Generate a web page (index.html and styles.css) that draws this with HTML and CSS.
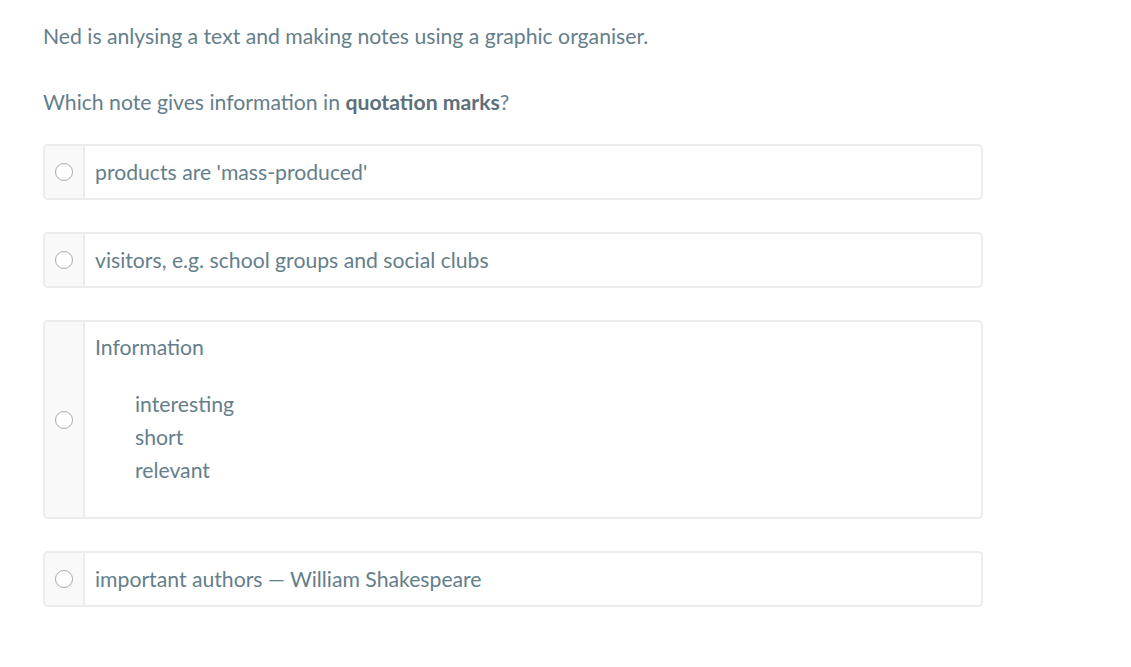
FILE: index.html
```html
<!DOCTYPE html>
<html>
<head>
<meta charset="utf-8">
<link rel="stylesheet" href="styles.css">
</head>
<body>
<div class="page">
  <p class="stem">Ned is anlysing a text and making notes using a graphic organiser.</p>
  <p class="stem q">Which note gives information in <strong>quotation marks</strong>?</p>
  <div class="options">
    <label class="opt">
      <span class="radio-col"><span class="radio"></span></span>
      <span class="txt">products are 'mass-produced'</span>
    </label>
    <label class="opt">
      <span class="radio-col"><span class="radio"></span></span>
      <span class="txt">visitors, e.g. school groups and social clubs</span>
    </label>
    <label class="opt">
      <span class="radio-col"><span class="radio"></span></span>
      <span class="txt tall">
        <span class="head">Information</span>
        <span class="list">
          <span>interesting</span>
          <span>short</span>
          <span>relevant</span>
        </span>
      </span>
    </label>
    <label class="opt">
      <span class="radio-col"><span class="radio"></span></span>
      <span class="txt">important authors — William Shakespeare</span>
    </label>
  </div>
</div>
</body>
</html>
```

FILE: styles.css
```css
html, body { margin: 0; padding: 0; background: #fff; }
body { font-family: "Lato", "Open Sans", sans-serif; color: #647e8b; font-size: 21.2px; }
.page { padding: 22px 0 0 43px; width: 940px; }
.stem { margin: 0; line-height: 28px; }
.q { margin-top: 38px; }
.q strong { font-weight: 700; color: #5c707b; }
.options { margin-top: 28px; display: flex; flex-direction: column; gap: 32px; }
.opt { box-sizing: border-box; display: flex; border: 2px solid #ececec; border-radius: 5px; overflow: hidden; min-height: 56px; }
.radio-col { width: 38px; background: #f9f9f9; border-right: 2px solid #ececec; display: flex; align-items: center; justify-content: center; flex: none; }
.radio { width: 16px; height: 16px; border: 1px solid #a9a9a9; border-radius: 50%; background: #fff; }
.txt { padding: 0 10px; display: flex; align-items: center; }
.txt.tall { flex-direction: column; align-items: flex-start; padding: 12px 10px 30px; height: 195px; box-sizing: border-box; }
.head { line-height: 26px; }
.list { display: flex; flex-direction: column; padding-left: 40px; margin-top: 28px; line-height: 33px; }
```
